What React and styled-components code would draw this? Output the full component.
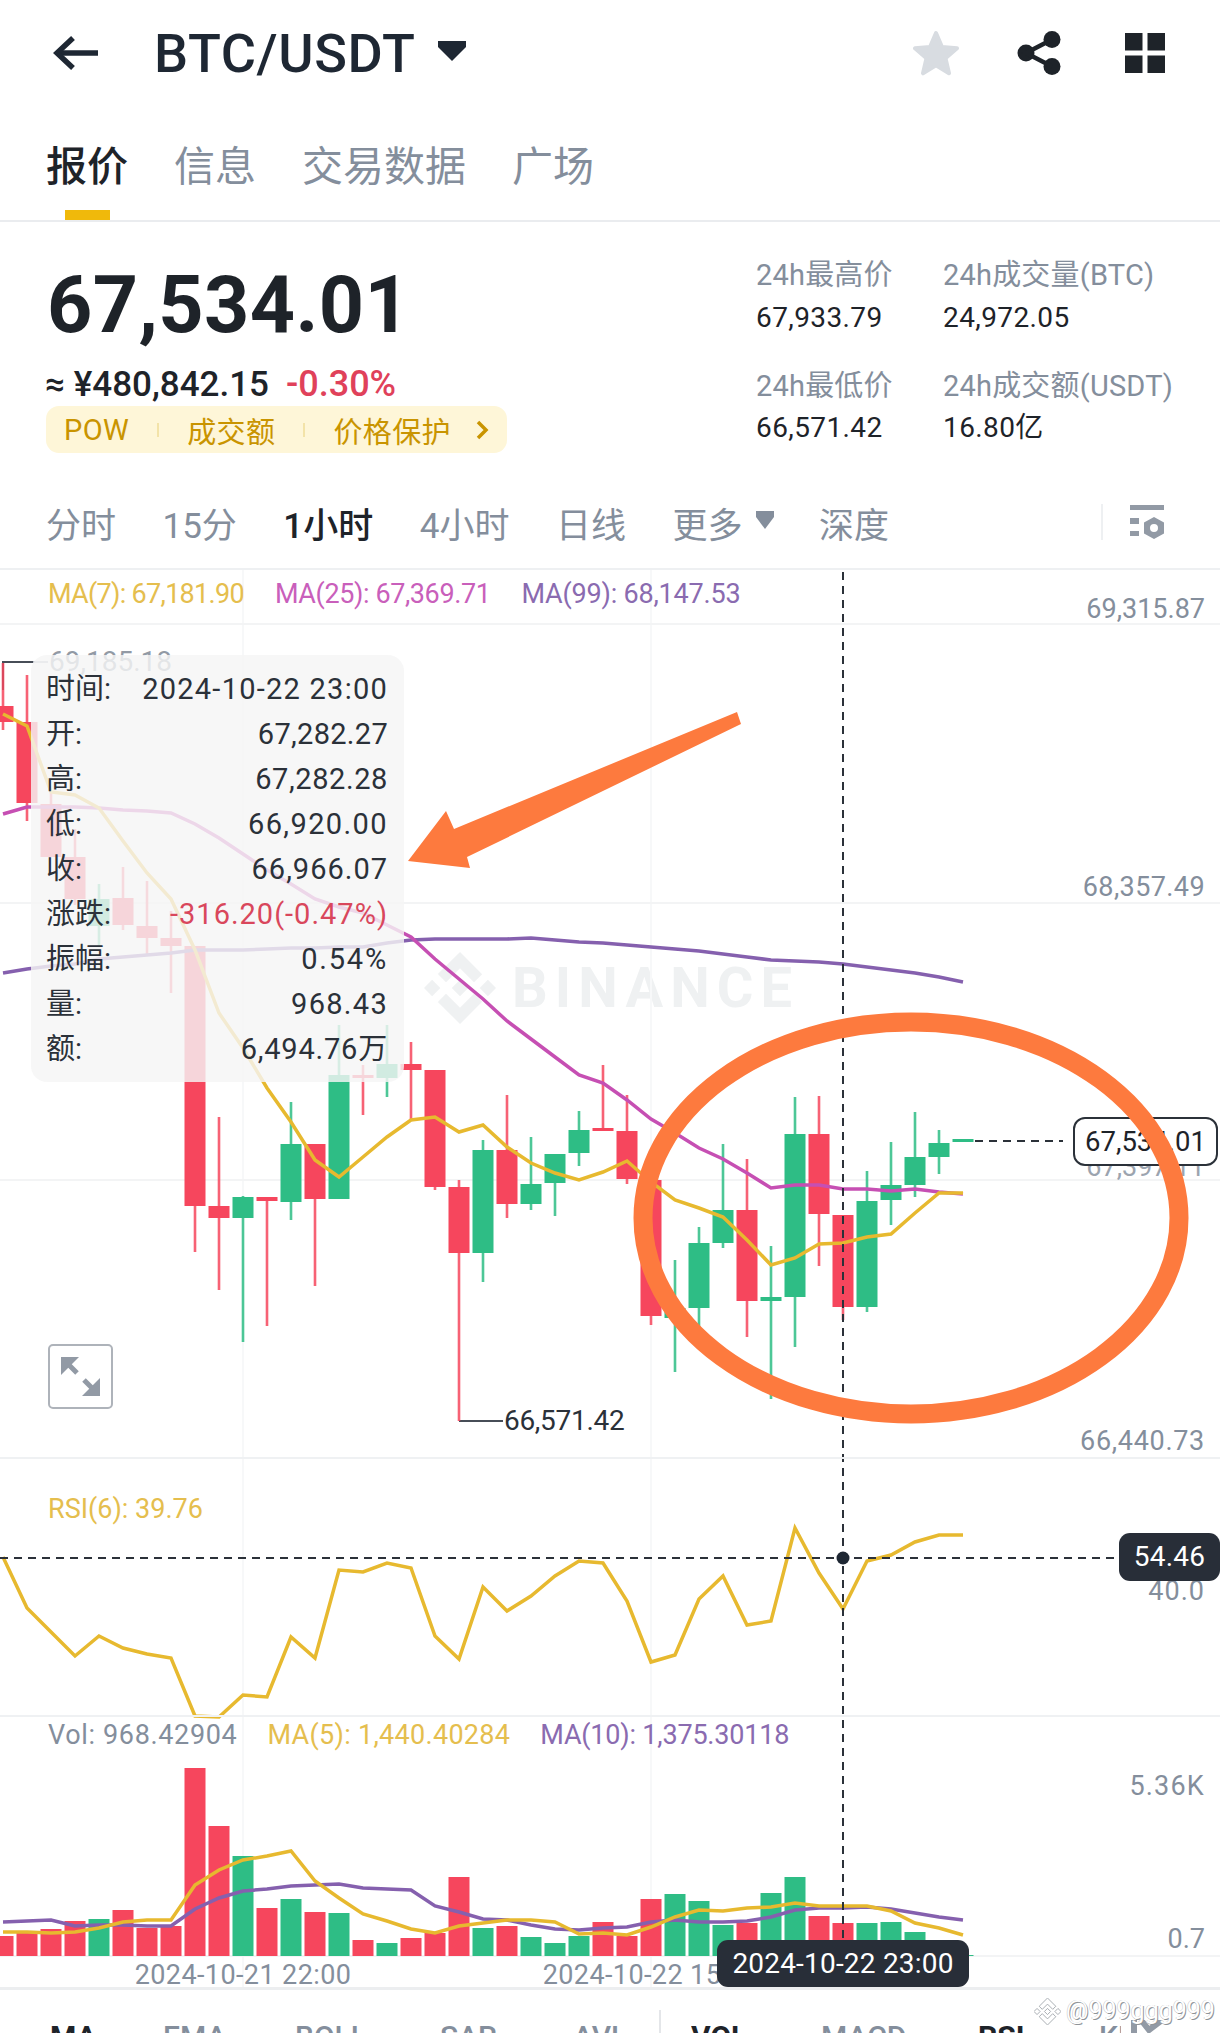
import React from 'react'
import styled, { createGlobalStyle } from "styled-components"

const GlobalStyle = createGlobalStyle`
html, body {
  margin: 0;
  padding: 0;
  background: #fff;
}
`
const FONT = `Roboto, "Noto Sans CJK SC", sans-serif`
const DARK = '#1e2329'
const GRAY = '#848e9c'
const GREEN = '#2ebd85'
const RED = '#f6465d'

const Page = styled.div`
width: 1220px;
height: 2033px;
overflow: hidden;
background: #fff;
font-family: ${FONT};
color: ${DARK};
`
const Header = styled.div`
height: 106px;
display: flex;
align-items: center;
padding: 0 55px 0 53px;
box-sizing: border-box;
`
const Title = styled.div`
font-size: 54px;
font-weight: 500;
color: #1e2733;
margin-left: 56px;
letter-spacing: 0.6px;
`
const TitleCaret = styled.svg`
width: 28px;
height: 20px;
margin: 0 0 4px 22px;
`
const HeaderIcons = styled.div`
margin-left: auto;
display: flex;
align-items: center;
gap: 58px;
`
const Tabs = styled.div`
height: 114px;
display: flex;
gap: 46px;
padding: 0 0 0 46px;
border-bottom: 2px solid #eaecef;
`
const Tab = styled.div`
position: relative;
font-size: 41px;
line-height: 58px;
padding-top: 32px;
color: ${p => (p.$active ? DARK : GRAY)};
font-weight: ${p => (p.$active ? 500 : 400)};
&::after {
  content: '';
  display: ${p => (p.$active ? 'block' : 'none')};
  position: absolute;
  left: 19px;
  bottom: 0;
  width: 45px;
  height: 10px;
  background: #f0b90b;
}
`
const Summary = styled.div`
height: 258px;
display: flex;
padding-left: 47px;
`
const PriceColumn = styled.div`
width: 709px;
padding-top: 43px;
box-sizing: border-box;
`
const BigPrice = styled.div`
font-size: 79px;
line-height: 80px;
font-weight: 700;
letter-spacing: 0.4px;
`
const QuoteLine = styled.div`
margin-top: 21px;
margin-left: -2px;
font-size: 35px;
line-height: 36px;
font-weight: 500;
`
const Change = styled.span`
color: #e0415a;
margin-left: 17px;
font-size: 36px;
`
const Pill = styled.div`
margin-top: 3px;
margin-left: -1px;
width: 461px;
height: 47px;
border-radius: 13px;
background: #fef6d8;
display: flex;
align-items: center;
padding-left: 18px;
box-sizing: border-box;
color: #c99400;
font-size: 29px;
letter-spacing: 0.4px;
`
const PillSep = styled.i`
width: 2px;
height: 14px;
background: #f3e3a8;
margin: ${p => p.$margin};
`
const StatsGrid = styled.div`
padding-top: 35px;
display: grid;
grid-template-columns: 187px 220px;
grid-auto-rows: 79px;
row-gap: 32px;
`
const Stat = styled.div`
display: flex;
flex-direction: column;
gap: ${p => p.$gap}px;
`
const StatLabel = styled.div`
font-size: 29px;
line-height: 36px;
color: ${GRAY};
white-space: nowrap;
letter-spacing: 0.2px;
`
const StatValue = styled.div`
font-size: 28px;
line-height: 36px;
white-space: nowrap;
letter-spacing: 0.4px;
`
const Intervals = styled.div`
height: 90px;
box-sizing: border-box;
display: flex;
align-items: center;
gap: 46.5px;
padding: 0 55px 4px 46px;
border-bottom: 2px solid #eef0f2;
`
const Interval = styled.div`
font-size: 35px;
color: ${p => (p.$active ? DARK : GRAY)};
font-weight: ${p => (p.$active ? 500 : 400)};
display: flex;
align-items: center;
white-space: nowrap;
`
const IntervalCaret = styled.svg`
width: 18px;
height: 18px;
margin: 0 -2px 4px 14px;
`
const IntervalTools = styled.div`
margin-left: auto;
height: 36px;
padding-left: 26px;
border-left: 2px solid #eef0f2;
display: flex;
align-items: center;
`
const ChartArea = styled.div`
position: relative;
height: 1418px;
`
const ChartLayer = styled.svg`
position: absolute;
left: 0;
top: 0;
width: 1220px;
height: 1418px;
`
const AnnotationLayer = styled(ChartLayer)`
z-index: 5;
pointer-events: none;
`
const MainPanel = styled.div`
height: 887px;
border-bottom: 2px solid #eff1f3;
position: relative;
`
const RsiPanel = styled.div`
height: 256px;
border-bottom: 2px solid #eff1f3;
position: relative;
`
const VolPanel = styled.div`
height: 270px;
border-bottom: 3px solid #eceef0;
position: relative;
`
const Legend = styled.div`
position: relative;
display: flex;
gap: ${p => p.$gap || 31}px;
font-size: 27px;
line-height: 36px;
padding: ${p => p.$pad || 0}px 0 0 48px;
white-space: nowrap;
`
const LegendItem = styled.span`
color: ${p => p.$color};
letter-spacing: ${p => p.$ls || 0}px;
`
const AxisLabel = styled.div`
position: absolute;
right: 15px;
top: ${p => p.$top}px;
font-size: 27px;
line-height: 32px;
color: ${GRAY};
letter-spacing: ${p => p.$ls || 0}px;
opacity: ${p => (p.$faded ? 0.8 : 1)};
`
const PeakLabel = styled.div`
position: absolute;
left: ${p => p.$left}px;
top: ${p => p.$top}px;
font-size: 28px;
line-height: 32px;
color: ${p => p.$color};
letter-spacing: ${p => p.$ls || 0}px;
`
const WatermarkMark = styled.div`
position: absolute;
left: 424px;
top: 382px;
display: flex;
`
const Watermark = styled.div`
position: absolute;
left: 512px;
top: 390px;
font-size: 56px;
line-height: 56px;
font-weight: 700;
letter-spacing: 7.1px;
color: #eff1f2;
`
const TooltipBox = styled.div`
position: absolute;
z-index: 2;
left: 31px;
top: 85px;
width: 373px;
height: 427px;
box-sizing: border-box;
padding: 12px 16px 0 15px;
background: rgba(245, 245, 245, 0.82);
border-radius: 16px;
`
const TooltipRow = styled.div`
display: flex;
justify-content: space-between;
height: 45px;
line-height: 44px;
font-size: 29px;
white-space: nowrap;
color: #2b3139;
`
const TooltipValue = styled.span`
color: ${p => p.$color || '#2b3139'};
letter-spacing: ${p => p.$ls}px;
`
const ExpandButton = styled.div`
position: absolute;
left: 48px;
top: 774px;
width: 65px;
height: 65px;
box-sizing: border-box;
border: 2px solid #aeb3ba;
border-radius: 5px;
background: #fff;
display: flex;
align-items: center;
justify-content: center;
`
const PriceTag = styled.div`
position: absolute;
z-index: 3;
left: 1073px;
top: 547px;
width: 145px;
height: 49px;
box-sizing: border-box;
border: 2px solid #2b3139;
border-radius: 12px;
background: #fff;
font-size: 27.5px;
line-height: 46px;
text-align: center;
color: #1e2329;
`
const DarkTag = styled.div`
position: absolute;
z-index: 3;
background: #282e38;
color: #fff;
text-align: center;
border-radius: 11px;
left: ${p => p.$left}px;
top: ${p => p.$top}px;
width: ${p => p.$width}px;
height: ${p => p.$height}px;
line-height: ${p => p.$height}px;
font-size: 28px;
letter-spacing: 0.2px;
`
const DateLabel = styled.div`
position: absolute;
top: 1389px;
left: ${p => p.$center - 120}px;
width: 240px;
text-align: center;
font-size: 27px;
line-height: 32px;
letter-spacing: 0.4px;
color: ${GRAY};
`
const BottomTabs = styled.div`
position: relative;
height: 45px;
`
const BottomRow = styled.div`
display: flex;
padding: 31px 0 0 50px;
font-size: 30px;
line-height: 36px;
white-space: nowrap;
`
const BottomItem = styled.span`
width: ${p => p.$width}px;
overflow: hidden;
color: ${p => (p.$active ? DARK : GRAY)};
font-weight: ${p => (p.$active ? 700 : 500)};
`
const BottomSep = styled.i`
width: 2px;
height: 30px;
margin: -9px 30px 0 0;
background: #e4e6e9;
`
const BottomIcon = styled.svg`
position: absolute;
left: 1128px;
top: 32px;
`
const Handle = styled.div`
position: absolute;
z-index: 6;
left: 1034px;
top: 9px;
display: flex;
align-items: center;
gap: 5px;
font-size: 25px;
line-height: 28px;
color: #fff;
text-shadow: 1px 1px 0 #8f9499, -0.5px -0.5px 0 #c3c6c9;
`

// x of candle i
const cx = i => 3 + 24 * i

// [green, high, low, bodyTop, bodyBottom]
const candles = [
  [0, 663, 730, 706, 722], [0, 675, 821, 722, 803], [0, 792, 857, 804, 857], [0, 829, 905, 857, 899],
  [1, 884, 947, 899, 926], [0, 867, 930, 898, 925], [0, 881, 956, 926, 938], [0, 911, 993, 938, 946],
  [0, 946, 1252, 946, 1206], [0, 1117, 1290, 1206, 1218], [1, 1196, 1342, 1197, 1218], [0, 1197, 1326, 1197, 1201],
  [1, 1102, 1220, 1144, 1202], [0, 1144, 1286, 1144, 1199], [1, 1025, 1199, 1075, 1199], [0, 1065, 1115, 1075, 1078],
  [1, 1025, 1097, 1064, 1078], [0, 1042, 1120, 1064, 1070], [0, 1070, 1190, 1070, 1187], [0, 1180, 1421, 1187, 1253],
  [1, 1140, 1282, 1150, 1253], [0, 1095, 1218, 1150, 1204], [1, 1137, 1210, 1184, 1204], [1, 1154, 1216, 1154, 1183],
  [1, 1111, 1166, 1130, 1153], [0, 1065, 1130, 1128, 1131], [0, 1095, 1184, 1131, 1179], [0, 1165, 1325, 1180, 1316],
  [1, 1260, 1372, 1308, 1318], [1, 1227, 1340, 1243, 1308], [1, 1144, 1248, 1210, 1243], [0, 1159, 1337, 1210, 1301],
  [1, 1246, 1399, 1297, 1301], [1, 1097, 1347, 1134, 1297], [0, 1096, 1266, 1134, 1214], [0, 1215, 1320, 1215, 1307],
  [1, 1171, 1312, 1201, 1307], [1, 1142, 1225, 1185, 1200], [1, 1112, 1197, 1157, 1185], [1, 1130, 1174, 1143, 1157],
  [1, 1139, 1142, 1139, 1142],
]
const ma7 = [714, 726, 792, 795, 808, 841, 873, 899, 950, 1013, 1048, 1088, 1122, 1160, 1177, 1157, 1137, 1120, 1117, 1132, 1125, 1147, 1163, 1173, 1180, 1172, 1161, 1182, 1200, 1208, 1217, 1240, 1265, 1258, 1244, 1243, 1237, 1234, 1213, 1193, 1193]
const ma25 = [814, 807, 807, 807, 808, 810, 811, 813, 824, 838, 854, 870, 884, 899, 907, 913, 925, 937, 959, 979, 999, 1021, 1039, 1057, 1075, 1083, 1100, 1119, 1133, 1148, 1159, 1173, 1188, 1185, 1185, 1189, 1189, 1191, 1189, 1192, 1194]
const ma99 = [973, 969, 966, 964, 959, 957, 955, 953, 950, 950, 950, 949, 948, 948, 947, 947, 943, 940, 939, 939, 939, 939, 938, 940, 942, 943, 945, 947, 949, 951, 954, 957, 960, 961, 962, 964, 967, 970, 973, 977, 982]
const rsi = [1557, 1608, 1632, 1656, 1636, 1648, 1654, 1658, 1716, 1717, 1695, 1697, 1637, 1658, 1570, 1572, 1563, 1568, 1636, 1659, 1587, 1611, 1596, 1576, 1561, 1563, 1601, 1662, 1655, 1599, 1576, 1625, 1621, 1528, 1573, 1609, 1561, 1555, 1542, 1535, 1535]
const volTops = [1936, 1933, 1929, 1921, 1919, 1910, 1928, 1926, 1768, 1826, 1856, 1908, 1899, 1912, 1913, 1940, 1943, 1938, 1933, 1877, 1928, 1926, 1937, 1943, 1936, 1922, 1936, 1899, 1894, 1901, 1925, 1923, 1893, 1877, 1916, 1923, 1923, 1922, 1932, 1945, 1955]
const volGreen = new Set([4, 10, 12, 14, 16, 20, 22, 23, 24, 28, 29, 30, 32, 33, 36, 37, 38, 39, 40])
const volMa5 = [1932, 1932, 1933, 1932, 1928, 1922, 1920, 1920, 1885, 1870, 1860, 1856, 1851, 1881, 1898, 1914, 1921, 1929, 1933, 1926, 1923, 1920, 1920, 1922, 1934, 1933, 1935, 1927, 1917, 1910, 1911, 1908, 1907, 1903, 1906, 1906, 1906, 1911, 1923, 1928, 1935]
const volMa10 = [1922, 1921, 1920, 1926, 1925, 1925, 1926, 1926, 1909, 1898, 1891, 1889, 1886, 1885, 1884, 1888, 1889, 1890, 1906, 1912, 1919, 1920, 1925, 1929, 1930, 1928, 1927, 1922, 1920, 1922, 1922, 1921, 1917, 1910, 1908, 1908, 1907, 1909, 1913, 1917, 1920]

const toPoints = ys => ys.map((y, i) => `${cx(i)},${y}`).join(' ')

const BackIcon = () => (
  <svg width="45" height="34" viewBox="0 0 45 34" fill="none" stroke="#1e2733" strokeWidth="5.5">
    <path d="M45 17H4" />
    <path d="M20 2L4 17l16 15" strokeLinejoin="miter" />
  </svg>
)
const StarIcon = () => (
  <svg width="46" height="46" viewBox="0 0 46 46" fill="#d8dce1" stroke="#d8dce1" strokeWidth="4" strokeLinejoin="round">
    <path d="M23 3l6 14 15 1.300-11.500 10 3.500 15-13-8-13 8 3.500-15L2 18.300 17 17z" />
  </svg>
)
const ShareIcon = () => (
  <svg width="44" height="46" viewBox="0 0 44 46" fill="#1e2329">
    <circle cx="35" cy="9.500" r="8.500" />
    <circle cx="9" cy="23" r="8.500" />
    <circle cx="35" cy="36.500" r="8.500" />
    <path d="M35 9.500L9 23l26 13.500" fill="none" stroke="#1e2329" strokeWidth="4.500" />
  </svg>
)
const GridIcon = () => (
  <svg width="40" height="40" viewBox="0 0 40 40" fill="#1e2329" style={{ marginLeft: 6 }}>
    <rect x="0" y="0" width="17.500" height="17.500" />
    <rect x="22.500" y="0" width="17.500" height="17.500" />
    <rect x="0" y="22.500" width="17.500" height="17.500" />
    <rect x="22.500" y="22.500" width="17.500" height="17.500" />
  </svg>
)
const ToolsIcon = () => (
  <svg width="36" height="36" viewBox="0 0 36 36" fill="#929aa5">
    <rect x="1" y="1" width="34" height="5" />
    <rect x="1" y="14" width="9" height="6" />
    <rect x="1" y="27" width="9" height="5" />
    <path fillRule="evenodd" d="M25 13l10 5.500v11L25 35l-10-5.500v-11zM25 20a4 4 0 1 0 0 8 4 4 0 0 0 0-8z" />
  </svg>
)
const ExpandIcon = () => (
  <svg width="41" height="41" viewBox="0 0 41 41" fill="#929aa5" stroke="none">
    <path d="M1 1h18L1 19z" />
    <path d="M40 40H22L40 22z" />
    <path d="M9 9l8 8M24 24l8 8" stroke="#929aa5" strokeWidth="5" />
  </svg>
)
const BinanceMark = ({ size, color, stroke, strokeWidth }) => (
  <svg width={size} height={size} viewBox="0 0 126.610 126.610" fill={color} stroke={stroke} strokeWidth={strokeWidth}>
    <path d="M38.730 53.200l24.590-24.580 24.600 24.600 14.300-14.310L63.320 0 24.430 38.900zM0 63.310L14.300 49l14.310 14.310-14.310 14.300zM38.730 73.410L63.320 98l24.600-24.600 14.310 14.290-38.900 38.910-38.910-38.880zM98 63.310L112.300 49l14.310 14.300-14.310 14.320z" />
    <path d="M77.830 63.300L63.320 48.780 48.810 63.280l14.510 14.500z" />
  </svg>
)

const tooltipRows = [
  ['时间:', '2024-10-22 23:00', 1.25],
  ['开:', '67,282.27', 0.3],
  ['高:', '67,282.28', 0.6],
  ['低:', '66,920.00', 1.4],
  ['收:', '66,966.07', 1],
  ['涨跌:', '-316.20(-0.47%)', 1, '#d9475c'],
  ['振幅:', '0.54%', 1.8],
  ['量:', '968.43', 1.3],
  ['额:', '6,494.76万', 0.8],
]

const CandleChart = () => (
  <ChartLayer viewBox="0 570 1220 1418">
    {[243, 651].map(x => (
      <line key={x} x1={x} x2={x} y1="570" y2="1988" stroke="#f7f8f9" strokeWidth="2" />
    ))}
    {[624, 903, 1180, 1956].map(y => (
      <line key={y} x1="0" x2="1220" y1={y} y2={y} stroke="#f3f4f5" strokeWidth="2" />
    ))}
    <path d="M33 662H3V690" fill="none" stroke="#474d57" strokeWidth="2" />
    <path d="M33 662H48" fill="none" stroke="#b7bdc6" strokeWidth="2" />
    <path d="M459 1421H503" fill="none" stroke="#474d57" strokeWidth="2" />
    {candles.map(([green, high, low, top, bottom], i) => (
      <g key={i} fill={green ? GREEN : RED}>
        <rect x={cx(i) - 1.3} y={high} width="2.600" height={low - high} opacity="0.85" />
        <rect x={cx(i) - 10.500} y={top} width="21" height={bottom - top} />
      </g>
    ))}
    <polyline points={toPoints(ma99)} fill="none" stroke="#8560ae" strokeWidth="3.500" />
    <polyline points={toPoints(ma25)} fill="none" stroke="#c64fb3" strokeWidth="3.500" />
    <polyline points={toPoints(ma7)} fill="none" stroke="#e7b92f" strokeWidth="3.500" />
    <path d="M975 1141H1063" stroke="#2b3139" strokeWidth="2" strokeDasharray="8 6" />
    <polyline points={toPoints(rsi)} fill="none" stroke="#e7b92f" strokeWidth="3.500" />
    {volTops.map((top, i) => (
      <rect key={i} x={cx(i) - 10.500} y={top} width="21" height={1956 - top} fill={volGreen.has(i) ? GREEN : RED} />
    ))}
    <polyline points={toPoints(volMa10)} fill="none" stroke="#8560ae" strokeWidth="3.500" />
    <polyline points={toPoints(volMa5)} fill="none" stroke="#e7b92f" strokeWidth="3.500" />
    <path d="M843 572V1960" stroke="#2b3139" strokeWidth="2" strokeDasharray="8 6" />
    <path d="M0 1558H1125" stroke="#2b3139" strokeWidth="2" strokeDasharray="8 6" />
    <circle cx="843" cy="1558" r="6.500" fill="#1e2733" />
  </ChartLayer>
)

const Annotations = () => (
  <AnnotationLayer viewBox="0 570 1220 1418">
    <ellipse cx="911" cy="1218" rx="268" ry="196" fill="none" stroke="#fd7a3e" strokeWidth="19" />
    <polygon points="408,861 446,811 454,829 737,712 741,724 467,857 470,868" fill="#fd7a3e" />
  </AnnotationLayer>
)

export default function App() {
  return (
    <Page>
      <GlobalStyle />
      <Header>
        <BackIcon />
        <Title>BTC/USDT</Title>
        <TitleCaret viewBox="0 0 28 20"><path d="M0 0h28v6L14 20 0 6z" fill="#1e2733" /></TitleCaret>
        <HeaderIcons>
          <StarIcon />
          <ShareIcon />
          <GridIcon />
        </HeaderIcons>
      </Header>
      <Tabs>
        <Tab $active>报价</Tab>
        <Tab>信息</Tab>
        <Tab>交易数据</Tab>
        <Tab>广场</Tab>
      </Tabs>
      <Summary>
        <PriceColumn>
          <BigPrice>67,534.01</BigPrice>
          <QuoteLine>≈ ¥480,842.15<Change>-0.30%</Change></QuoteLine>
          <Pill>
            POW
            <PillSep $margin="0 28px 0 28px" />
            成交额
            <PillSep $margin="0 28px 0 28px" />
            价格保护
            <svg width="14" height="20" viewBox="0 0 14 20" fill="none" stroke="#c99400" strokeWidth="3.500" style={{ marginLeft: 24 }}>
              <path d="M3 2l8 8-8 8" />
            </svg>
          </Pill>
        </PriceColumn>
        <StatsGrid>
          <Stat $gap={7}><StatLabel>24h最高价</StatLabel><StatValue>67,933.79</StatValue></Stat>
          <Stat $gap={7}><StatLabel>24h成交量(BTC)</StatLabel><StatValue>24,972.05</StatValue></Stat>
          <Stat $gap={6}><StatLabel>24h最低价</StatLabel><StatValue>66,571.42</StatValue></Stat>
          <Stat $gap={6}><StatLabel>24h成交额(USDT)</StatLabel><StatValue>16.80亿</StatValue></Stat>
        </StatsGrid>
      </Summary>
      <Intervals>
        <Interval>分时</Interval>
        <Interval>15分</Interval>
        <Interval $active>1小时</Interval>
        <Interval>4小时</Interval>
        <Interval>日线</Interval>
        <Interval>
          更多
          <IntervalCaret viewBox="0 0 18 18"><path d="M0 0h18v6l-9 12-9-12z" fill={GRAY} /></IntervalCaret>
        </Interval>
        <Interval>深度</Interval>
        <IntervalTools><ToolsIcon /></IntervalTools>
      </Intervals>
      <ChartArea>
        <WatermarkMark><BinanceMark size={72} color="#eff1f2" /></WatermarkMark>
        <Watermark>BINANCE</Watermark>
        <CandleChart />
        <MainPanel>
          <Legend $pad={6}>
            <LegendItem $color="#e5be4e" $ls={-0.7}>MA(7): 67,181.90</LegendItem>
            <LegendItem $color="#c95fbb" $ls={-0.4}>MA(25): 67,369.71</LegendItem>
            <LegendItem $color="#8a6bb0" $ls={-0.2}>MA(99): 68,147.53</LegendItem>
          </Legend>
          <AxisLabel $top={23}>69,315.87</AxisLabel>
          <AxisLabel $top={301} $ls={0.4}>68,357.49</AxisLabel>
          <AxisLabel $top={581} $faded>67,397.11</AxisLabel>
          <AxisLabel $top={855} $ls={0.7}>66,440.73</AxisLabel>
          <PeakLabel $left={49} $top={76} $color="#929aa5">69,185.18</PeakLabel>
          <PeakLabel $left={504} $top={835} $color="#2b3139" $ls={-0.3}>66,571.42</PeakLabel>
          <TooltipBox>
            {tooltipRows.map(([label, value, ls, color]) => (
              <TooltipRow key={label}>
                <span>{label}</span>
                <TooltipValue $ls={ls} $color={color}>{value}</TooltipValue>
              </TooltipRow>
            ))}
          </TooltipBox>
          <ExpandButton><ExpandIcon /></ExpandButton>
          <PriceTag>67,534.01</PriceTag>
        </MainPanel>
        <RsiPanel>
          <Legend $pad={32}>
            <LegendItem $color="#e5be4e">RSI(6): 39.76</LegendItem>
          </Legend>
          <AxisLabel $top={116} $ls={1}>40.0</AxisLabel>
          <DarkTag $left={1119} $top={74} $width={101} $height={48}>54.46</DarkTag>
        </RsiPanel>
        <VolPanel>
          <Legend $gap={30}>
            <LegendItem $color={GRAY} $ls={0.65}>Vol: 968.42904</LegendItem>
            <LegendItem $color="#e5be4e" $ls={0.3}>MA(5): 1,440.40284</LegendItem>
            <LegendItem $color="#8a6bb0" $ls={-0.2}>MA(10): 1,375.30118</LegendItem>
          </Legend>
          <AxisLabel $top={53} $ls={1.2}>5.36K</AxisLabel>
          <AxisLabel $top={206}>0.7</AxisLabel>
          <DarkTag $left={717} $top={223} $width={252} $height={47}>2024-10-22 23:00</DarkTag>
        </VolPanel>
        <DateLabel $center={243}>2024-10-21 22:00</DateLabel>
        <DateLabel $center={651}>2024-10-22 15:00</DateLabel>
        <Annotations />
      </ChartArea>
      <BottomTabs>
        <BottomRow>
          <BottomItem $width={113} $active>MA</BottomItem>
          <BottomItem $width={132}>EMA</BottomItem>
          <BottomItem $width={145}>BOLL</BottomItem>
          <BottomItem $width={133}>SAR</BottomItem>
          <BottomItem $width={86}>AVL</BottomItem>
          <BottomSep />
          <BottomItem $width={130} $active>VOL</BottomItem>
          <BottomItem $width={157}>MACD</BottomItem>
          <BottomItem $width={121} $active>RSI</BottomItem>
          <BottomItem $width={22}>KDJ</BottomItem>
        </BottomRow>
        <BottomIcon width="36" height="16" viewBox="0 0 36 16" fill="none" stroke="#929aa5" strokeWidth="6">
          <path d="M6 0v16M13 0l8 10L34 0" />
        </BottomIcon>
        <Handle>
          <BinanceMark size={27} color="#fff" stroke="#9aa0a6" strokeWidth={4} />
          @999ggg999
        </Handle>
      </BottomTabs>
    </Page>
  )
}
